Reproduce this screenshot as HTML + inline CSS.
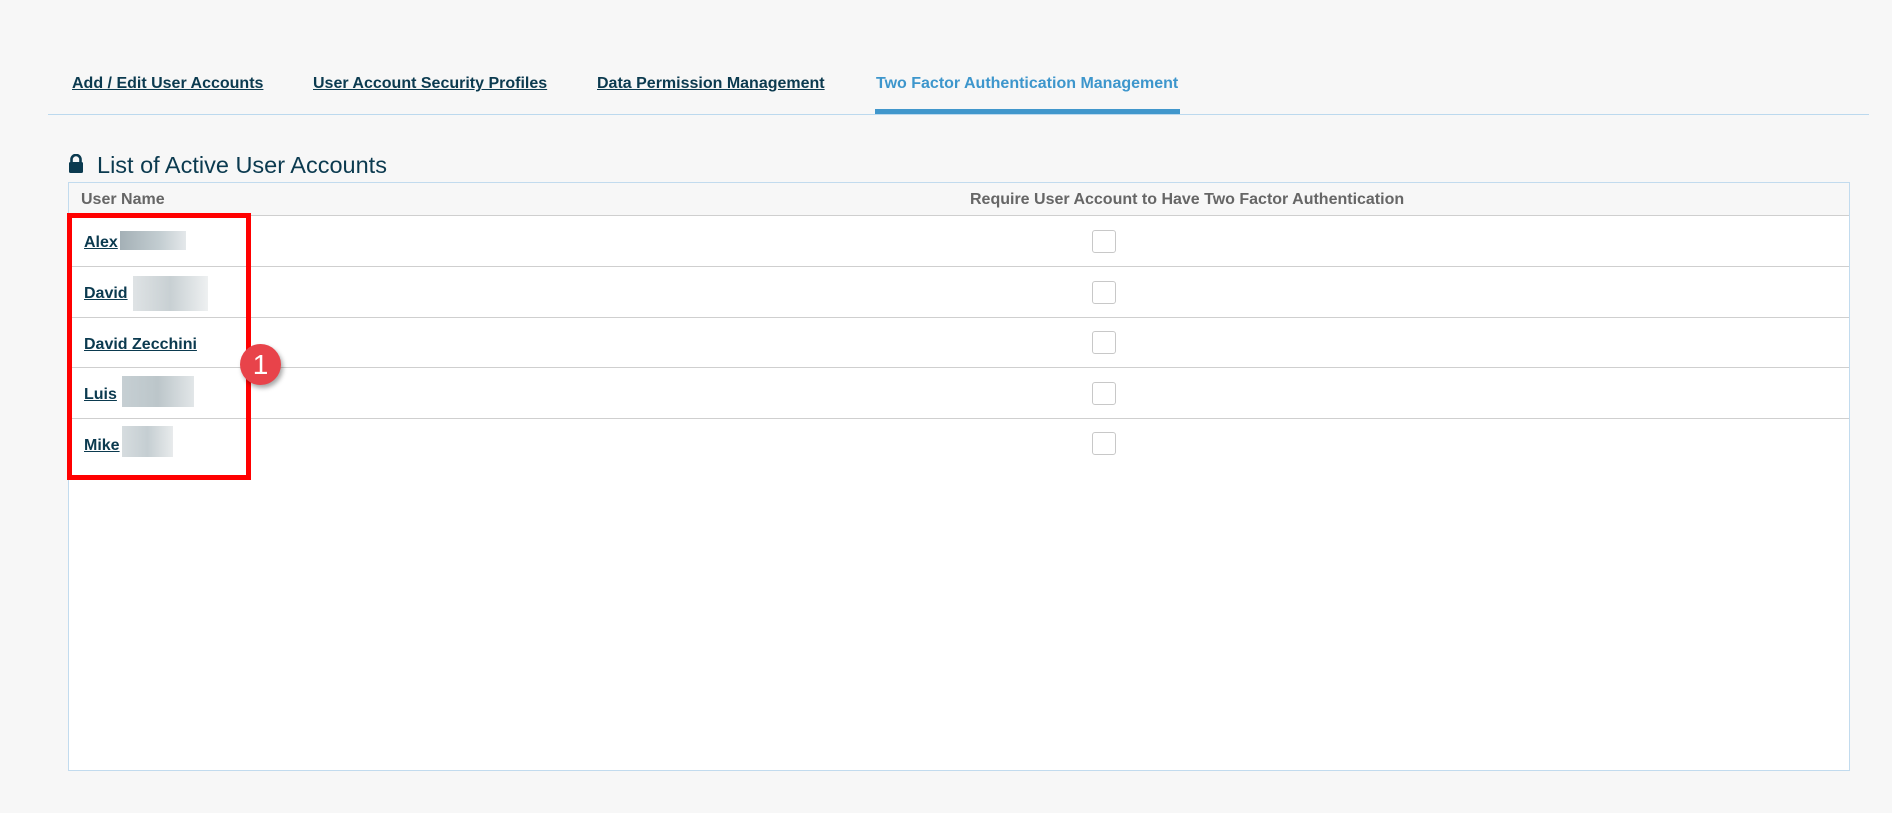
<!DOCTYPE html>
<html><head><meta charset="utf-8"><style>
body{margin:0;width:1892px;height:813px;background:#f7f7f7;font-family:"Liberation Sans",Arial,sans-serif;position:relative;overflow:hidden}
.a{position:absolute;white-space:nowrap}
.tab{font-weight:bold;font-size:16px;color:#0b3a4f;text-decoration:underline;top:75px}
.name{font-weight:bold;font-size:16px;color:#0b3a4f;text-decoration:underline;left:84px}
.blur{position:absolute;background:linear-gradient(90deg,#a4b0b6,#c3cdd1 60%,#e4e8ea)}
.cb{position:absolute;left:1092px;width:22px;height:21px;border:1px solid #c8c8c8;border-radius:3px;background:#fff}
.sep{position:absolute;left:69px;width:1780px;height:1px;background:#cfcfcf}
</style></head><body>
<div class="a tab" style="left:72px">Add / Edit User Accounts</div>
<div class="a tab" style="left:313px">User Account Security Profiles</div>
<div class="a tab" style="left:597px">Data Permission Management</div>
<div class="a tab" style="left:876px;color:#3d96cc;text-decoration:none">Two Factor Authentication Management</div>
<div class="a" style="left:875px;top:109px;width:305px;height:5px;background:#4197cc"></div>
<div class="a" style="left:48px;top:114px;width:1821px;height:1px;background:#bcd9ee"></div>

<svg class="a" style="left:68px;top:154px" width="16" height="19" viewBox="0 0 16 19"><path d="M3.5 8V5.5a4.5 4.5 0 0 1 9 0V8" fill="none" stroke="#0b3a4f" stroke-width="2.6"/><rect x="1" y="8" width="14" height="11" rx="1.5" fill="#0b3a4f"/></svg>
<div class="a" style="left:97px;top:152px;font-size:23.5px;color:#0b3a4f">List of Active User Accounts</div>

<div class="a" style="left:68px;top:182px;width:1780px;height:587px;border:1px solid #c2dbee;background:#fff"></div>
<div class="a" style="left:69px;top:183px;width:1780px;height:32px;background:#f7f7f7;border-bottom:1px solid #cfcfcf"></div>
<div class="a" style="left:81px;top:191px;font-size:16px;font-weight:bold;color:#666">User Name</div>
<div class="a" style="left:970px;top:191px;font-size:16px;font-weight:bold;color:#666">Require User Account to Have Two Factor Authentication</div>

<div class="sep" style="top:266px"></div>
<div class="sep" style="top:317px"></div>
<div class="sep" style="top:367px"></div>
<div class="sep" style="top:418px"></div>

<div class="a name" style="top:234px">Alex</div>
<div class="blur" style="left:120px;top:231px;width:66px;height:19px"></div>
<div class="a name" style="top:285px">David</div>
<div class="blur" style="left:133px;top:276px;width:75px;height:35px;background:linear-gradient(90deg,#dfe3e5,#c8d0d3 50%,#eef0f1)"></div>
<div class="a name" style="top:336px">David Zecchini</div>
<div class="a name" style="top:386px">Luis</div>
<div class="blur" style="left:122px;top:376px;width:72px;height:31px;background:linear-gradient(90deg,#c6cfd3,#bcc6ca 50%,#e2e6e8)"></div>
<div class="a name" style="top:437px">Mike</div>
<div class="blur" style="left:122px;top:426px;width:51px;height:31px;background:linear-gradient(90deg,#d6dcdf,#c5ced2 50%,#e8ebec)"></div>

<div class="cb" style="top:230px"></div>
<div class="cb" style="top:281px"></div>
<div class="cb" style="top:331px"></div>
<div class="cb" style="top:382px"></div>
<div class="cb" style="top:432px"></div>

<div class="a" style="left:67px;top:213px;width:174px;height:257px;border:5px solid #ff0000"></div>
<div class="a" style="left:240px;top:344px;width:41px;height:41px;border-radius:50%;background:#e8434a;box-shadow:2px 3px 5px rgba(0,0,0,.35);color:#fff;font-size:28px;line-height:41px;text-align:center">1</div>
</body></html>
